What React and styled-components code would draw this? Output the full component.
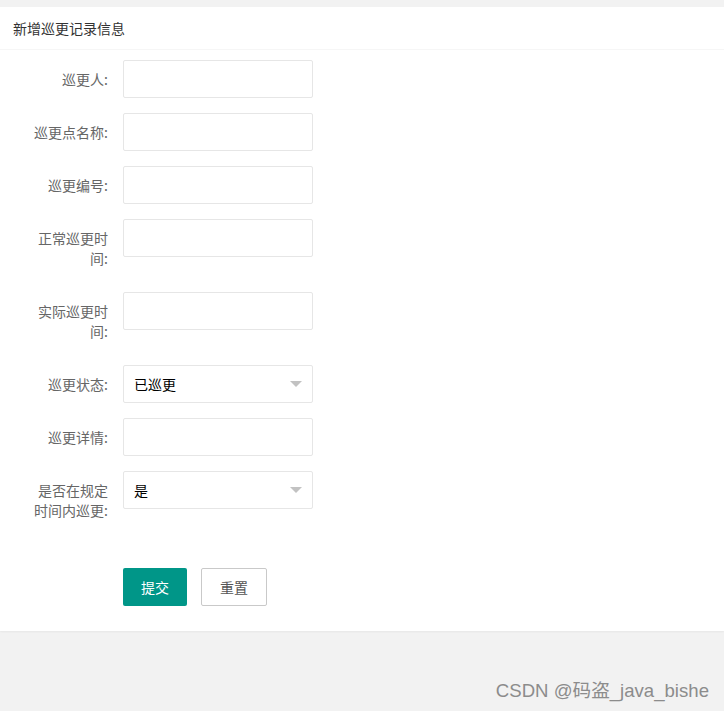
import React from 'react'
import styled, { createGlobalStyle } from 'styled-components'

const Global = createGlobalStyle`
  html, body {
    margin: 0;
    padding: 0;
    background: #f2f2f2;
    font-family: "Noto Sans CJK SC", "Microsoft YaHei", sans-serif;
    font-size: 14px;
    color: #666;
  }
`

const Page = styled.div`
  padding-top: 7px;
  min-height: 711px;
  box-sizing: border-box;
  position: relative;
`

const Card = styled.div`
  background: #fff;
  box-shadow: 0 1px 2px 0 rgba(0, 0, 0, 0.05);
`

const CardHeader = styled.div`
  height: 42px;
  line-height: 42px;
  padding: 0 13px;
  border-bottom: 1px solid #f6f6f6;
  color: #333;
  font-size: 14px;
`

const CardBody = styled.div`
  padding: 10px 13px 10px;
`

const FormItem = styled.div`
  display: flex;
  align-items: flex-start;
  margin-bottom: 15px;
  margin-top: ${p => (p.$top ? p.$top : 0)}px;
`

const Label = styled.label`
  width: 80px;
  padding: 9px 15px;
  line-height: 20px;
  text-align: right;
  color: #666;
  flex-shrink: 0;
`

const Input = styled.input`
  width: 190px;
  height: 38px;
  box-sizing: border-box;
  border: 1px solid #e6e6e6;
  border-radius: 2px;
  padding: 0 10px;
  outline: none;
  background: #fff;
  font-family: inherit;
  font-size: 14px;
`

const Select = styled.div`
  position: relative;
  width: 190px;
  height: 38px;
  box-sizing: border-box;
  border: 1px solid #e6e6e6;
  border-radius: 2px;
  padding: 0 10px;
  line-height: 36px;
  color: #000;
  background: #fff;
  cursor: pointer;
`

const Arrow = styled.i`
  position: absolute;
  right: 10px;
  top: 15px;
  width: 0;
  height: 0;
  border-left: 6px solid transparent;
  border-right: 6px solid transparent;
  border-top: 6px solid #c2c2c2;
`

const Actions = styled.div`
  display: flex;
  gap: 14px;
  margin-left: 110px;
`

const Button = styled.button`
  height: 38px;
  line-height: 36px;
  padding: 0 18px;
  box-sizing: border-box;
  border-radius: 2px;
  font-family: inherit;
  font-size: 14px;
  cursor: pointer;
  border: ${p => (p.$primary ? 'none' : '1px solid #c9c9c9')};
  background: ${p => (p.$primary ? '#009688' : '#fff')};
  color: ${p => (p.$primary ? '#fff' : '#555')};
`

const Watermark = styled.div`
  position: absolute;
  right: 15px;
  bottom: 9px;
  font-family: "Liberation Sans", "Noto Sans CJK SC", sans-serif;
  font-size: 18.6px;
  color: #8c8c8c;
`

const fields = [
  { label: '巡更人:' },
  { label: '巡更点名称:' },
  { label: '巡更编号:' },
  { label: '正常巡更时间:' },
  { label: '实际巡更时间:' },
  { label: '巡更状态:', select: '已巡更' },
  { label: '巡更详情:' },
  { label: '是否在规定时间内巡更:', select: '是' },
]

export default function App() {
  return (
    <Page>
      <Global />
      <Card>
        <CardHeader>新增巡更记录信息</CardHeader>
        <CardBody>
          {fields.map(f => (
            <FormItem key={f.label}>
              <Label>{f.label}</Label>
              {f.select ? (
                <Select>
                  {f.select}
                  <Arrow />
                </Select>
              ) : (
                <Input type="text" />
              )}
            </FormItem>
          ))}
          <FormItem $top={39}>
            <Actions>
              <Button $primary>提交</Button>
              <Button>重置</Button>
            </Actions>
          </FormItem>
        </CardBody>
      </Card>
      <Watermark>CSDN @码盗_java_bishe</Watermark>
    </Page>
  )
}
